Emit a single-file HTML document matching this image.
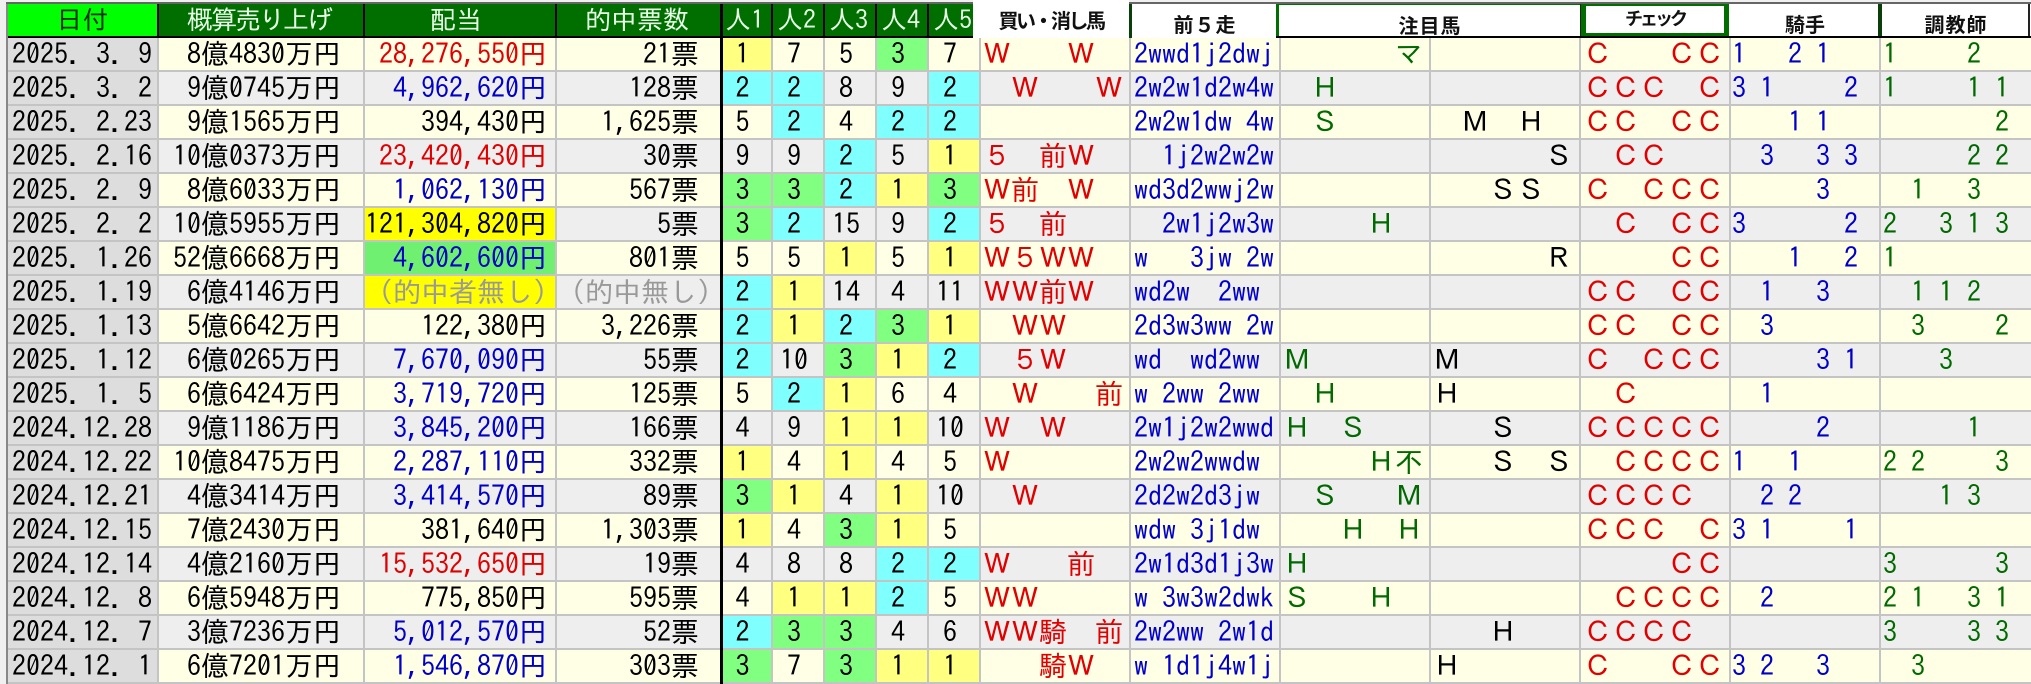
<!DOCTYPE html>
<html lang="ja"><head><meta charset="utf-8"><title>一覧</title>
<style>
html,body{margin:0;padding:0;background:#f0f0f0}
#p{position:relative;width:2031px;height:684px;overflow:hidden;background:#f0f0f0;font-family:"IPAGothic","Noto Sans CJK JP",monospace;font-size:28px;line-height:32px;color:#000}
.a{position:absolute}
#t{position:absolute;left:8px;top:38px;width:2023px;height:646px;background:#c4c4c4;display:flex;flex-direction:column;gap:2px}
.r{display:grid;grid-template-columns:149px 204px 190px 163px 49px 50px 50px 50px 50px 148px 148px 148px 148px 148px 148px 150px;column-gap:2px;height:32px}
.r>div{white-space:pre;overflow:visible}
.r:nth-child(odd)>div{background:#ffffe6}
.r:nth-child(even)>div{background:#eee}
.r>div:nth-child(1){background:#ddd!important;padding-left:4px}
.r>div:nth-child(2){text-align:right;padding-right:22px}
.r>div:nth-child(3){text-align:right;padding-right:8px}
.r>div:nth-child(4){text-align:right;padding-right:21px}
.r>div:nth-child(n+5):nth-child(-n+9){text-align:center;padding-right:8px}
.r>div:nth-child(10){color:#e00000;padding-left:2px}
.r>div:nth-child(11){color:#0000c8;padding-left:3px}
.r>div:nth-child(12){color:#006a00;padding-left:2px}
.r>div:nth-child(13){color:#000;padding-left:2px}
.r>div:nth-child(14){color:#e00000;padding-left:3px}
.r>div:nth-child(15){color:#0000c8;padding-left:1px}
.r>div:nth-child(16){color:#006a00;padding-left:2px}
.r>div.y{background:#ffff80!important}
.r>div.c{background:#80ffff!important}
.r>div.g{background:#80ff80!important}
.r>div.Y{background:#ffff00!important}
.r>div.G{background:#70f070!important}
.r>div.red{color:#e00000}
.r>div.blu{color:#0000c8}
.r>div.gy{color:#999;text-align:center!important;padding:0!important}
.h{position:absolute;top:4px;height:32px;line-height:32px;text-align:center;color:#e8ffe8;font-size:26px;white-space:pre}
.w{position:absolute;font-family:"Noto Sans CJK JP","IPAGothic",sans-serif;font-weight:700;color:#111;text-align:center;white-space:pre;line-height:24px;font-size:20px}
</style></head><body><div id="p">
<div class="a" style="left:6px;top:3px;width:2px;height:681px;background:#888"></div>
<div class="a" style="left:973px;top:0;width:156px;height:38px;background:#fff"></div>
<div class="a" style="left:1129px;top:3px;width:902px;height:35px;background:#fff"></div>
<div class="a" style="left:6px;top:2px;width:967px;height:2px;background:#666"></div>
<div class="a" style="left:1129px;top:2px;width:902px;height:2px;background:#666"></div>
<div class="a" style="left:8px;top:4px;width:965px;height:34px;background:#006f00"></div>
<div class="a" style="left:8px;top:4px;width:149px;height:32px;background:#00ff00"></div>
<div class="a" style="left:8px;top:36px;width:965px;height:2px;background:#000"></div>
<div class="a" style="left:1276px;top:36px;width:755px;height:2px;background:#000"></div>
<div class="a" style="left:157px;top:4px;width:2px;height:32px;background:#000"></div>
<div class="a" style="left:363px;top:4px;width:2px;height:32px;background:#000"></div>
<div class="a" style="left:555px;top:4px;width:2px;height:32px;background:#000"></div>
<div class="a" style="left:771px;top:4px;width:2px;height:32px;background:#000"></div>
<div class="a" style="left:823px;top:4px;width:2px;height:32px;background:#000"></div>
<div class="a" style="left:875px;top:4px;width:2px;height:32px;background:#000"></div>
<div class="a" style="left:927px;top:4px;width:2px;height:32px;background:#000"></div>
<div class="a" style="left:1129px;top:4px;width:3px;height:34px;background:#0a3f0a"></div>
<div class="a" style="left:1276px;top:4px;width:3px;height:32px;background:#006f00"></div>
<div class="a" style="left:1279px;top:4px;width:301px;height:1px;background:#006f00"></div>
<div class="a" style="left:1580px;top:4px;width:1px;height:32px;background:#222"></div>
<div class="a" style="left:1581px;top:4px;width:148px;height:32px;box-sizing:border-box;border:solid #006f00;border-width:2px 5px 3px 5px;background:#fff"></div>
<div class="a" style="left:1878px;top:4px;width:4px;height:32px;background:#0a3f0a"></div>
<div class="a" style="left:2028px;top:4px;width:2px;height:32px;background:#222"></div>

<div class="h" style="left:8px;width:149px;color:#002a00">日付</div>
<div class="h" style="left:159px;width:200px;letter-spacing:-2px">概算売り上げ</div>
<div class="h" style="left:365px;width:182px">配当</div>
<div class="h" style="left:557px;width:160px">的中票数</div>
<div class="h" style="left:725px;text-align:left">人1</div>
<div class="h" style="left:777px;text-align:left">人2</div>
<div class="h" style="left:829px;text-align:left">人3</div>
<div class="h" style="left:881px;text-align:left">人4</div>
<div class="h" style="left:933px;text-align:left">人5</div>
<div class="w" style="left:981px;width:140px;top:8px;letter-spacing:-2.5px">買い・消し馬</div>
<div class="w" style="left:1135px;width:140px;top:12px;letter-spacing:1px">前５走</div>
<div class="w" style="left:1380px;width:100px;top:13px;letter-spacing:1px">注目馬</div>
<div class="w" style="left:1595px;width:120px;top:6px;font-size:18px;letter-spacing:-3px">チェック</div>
<div class="w" style="left:1755px;width:100px;top:12px">騎手</div>
<div class="w" style="left:1906px;width:100px;top:12px;letter-spacing:1px">調教師</div>

<div id="t">
<div class="r"><div>2025. 3. 9</div><div>8億4830万円</div><div class="red">28,276,550円</div><div>21票</div><div class="y">1</div><div>7</div><div>5</div><div class="g">3</div><div>7</div><div>Ｗ　　Ｗ</div><div>2wwd1j2dwj</div><div>　　　　マ</div><div></div><div>Ｃ　　ＣＣ</div><div>1   2 1</div><div>1     2</div></div>
<div class="r"><div>2025. 3. 2</div><div>9億0745万円</div><div class="blu">4,962,620円</div><div>128票</div><div class="c">2</div><div class="c">2</div><div>8</div><div>9</div><div class="c">2</div><div>　Ｗ　　Ｗ</div><div>2w2w1d2w4w</div><div>　Ｈ</div><div></div><div>ＣＣＣ　Ｃ</div><div>3 1     2</div><div>1     1 1</div></div>
<div class="r"><div>2025. 2.23</div><div>9億1565万円</div><div>394,430円</div><div>1,625票</div><div>5</div><div class="c">2</div><div>4</div><div class="c">2</div><div class="c">2</div><div></div><div>2w2w1dw 4w</div><div>　Ｓ</div><div>　Ｍ　Ｈ</div><div>ＣＣ　ＣＣ</div><div>    1 1</div><div>        2</div></div>
<div class="r"><div>2025. 2.16</div><div>10億0373万円</div><div class="red">23,420,430円</div><div>30票</div><div>9</div><div>9</div><div class="c">2</div><div>5</div><div class="y">1</div><div>５　前Ｗ</div><div>  1j2w2w2w</div><div></div><div>　　　　Ｓ</div><div>　ＣＣ</div><div>  3   3 3</div><div>      2 2</div></div>
<div class="r"><div>2025. 2. 9</div><div>8億6033万円</div><div class="blu">1,062,130円</div><div>567票</div><div class="g">3</div><div class="g">3</div><div class="c">2</div><div class="y">1</div><div class="g">3</div><div>Ｗ前　Ｗ</div><div>wd3d2wwj2w</div><div></div><div>　　ＳＳ</div><div>Ｃ　ＣＣＣ</div><div>      3</div><div>  1   3</div></div>
<div class="r"><div>2025. 2. 2</div><div>10億5955万円</div><div class="Y">121,304,820円</div><div>5票</div><div class="g">3</div><div class="c">2</div><div>15</div><div>9</div><div class="c">2</div><div>５　前</div><div>  2w1j2w3w</div><div>　　　Ｈ</div><div></div><div>　Ｃ　ＣＣ</div><div>3       2</div><div>2   3 1 3</div></div>
<div class="r"><div>2025. 1.26</div><div>52億6668万円</div><div class="G blu">4,602,600円</div><div>801票</div><div>5</div><div>5</div><div class="y">1</div><div>5</div><div class="y">1</div><div>Ｗ５ＷＷ</div><div>w   3jw 2w</div><div></div><div>　　　　Ｒ</div><div>　　　ＣＣ</div><div>    1   2</div><div>1</div></div>
<div class="r"><div>2025. 1.19</div><div>6億4146万円</div><div class="Y gy">（的中者無し）</div><div class="gy">（的中無し）</div><div class="c">2</div><div class="y">1</div><div>14</div><div>4</div><div>11</div><div>ＷＷ前Ｗ</div><div>wd2w  2ww</div><div></div><div></div><div>ＣＣ　ＣＣ</div><div>  1   3</div><div>  1 1 2</div></div>
<div class="r"><div>2025. 1.13</div><div>5億6642万円</div><div>122,380円</div><div>3,226票</div><div class="c">2</div><div class="y">1</div><div class="c">2</div><div class="g">3</div><div class="y">1</div><div>　ＷＷ</div><div>2d3w3ww 2w</div><div></div><div></div><div>ＣＣ　ＣＣ</div><div>  3</div><div>  3     2</div></div>
<div class="r"><div>2025. 1.12</div><div>6億0265万円</div><div class="blu">7,670,090円</div><div>55票</div><div class="c">2</div><div>10</div><div class="g">3</div><div class="y">1</div><div class="c">2</div><div>　５Ｗ</div><div>wd  wd2ww</div><div>Ｍ</div><div>Ｍ</div><div>Ｃ　ＣＣＣ</div><div>      3 1</div><div>    3</div></div>
<div class="r"><div>2025. 1. 5</div><div>6億6424万円</div><div class="blu">3,719,720円</div><div>125票</div><div>5</div><div class="c">2</div><div class="y">1</div><div>6</div><div>4</div><div>　Ｗ　　前</div><div>w 2ww 2ww</div><div>　Ｈ</div><div>Ｈ</div><div>　Ｃ</div><div>  1</div><div></div></div>
<div class="r"><div>2024.12.28</div><div>9億1186万円</div><div class="blu">3,845,200円</div><div>166票</div><div>4</div><div>9</div><div class="y">1</div><div class="y">1</div><div>10</div><div>Ｗ　Ｗ</div><div>2w1j2w2wwd</div><div>Ｈ　Ｓ</div><div>　　Ｓ</div><div>ＣＣＣＣＣ</div><div>      2</div><div>      1</div></div>
<div class="r"><div>2024.12.22</div><div>10億8475万円</div><div class="blu">2,287,110円</div><div>332票</div><div class="y">1</div><div>4</div><div class="y">1</div><div>4</div><div>5</div><div>Ｗ</div><div>2w2w2wwdw</div><div>　　　Ｈ不</div><div>　　Ｓ　Ｓ</div><div>　ＣＣＣＣ</div><div>1   1</div><div>2 2     3</div></div>
<div class="r"><div>2024.12.21</div><div>4億3414万円</div><div class="blu">3,414,570円</div><div>89票</div><div class="g">3</div><div class="y">1</div><div>4</div><div class="y">1</div><div>10</div><div>　Ｗ</div><div>2d2w2d3jw</div><div>　Ｓ　　Ｍ</div><div></div><div>ＣＣＣＣ</div><div>  2 2</div><div>    1 3</div></div>
<div class="r"><div>2024.12.15</div><div>7億2430万円</div><div>381,640円</div><div>1,303票</div><div class="y">1</div><div>4</div><div class="g">3</div><div class="y">1</div><div>5</div><div></div><div>wdw 3j1dw</div><div>　　Ｈ　Ｈ</div><div></div><div>ＣＣＣ　Ｃ</div><div>3 1     1</div><div></div></div>
<div class="r"><div>2024.12.14</div><div>4億2160万円</div><div class="red">15,532,650円</div><div>19票</div><div>4</div><div>8</div><div>8</div><div class="c">2</div><div class="c">2</div><div>Ｗ　　前</div><div>2w1d3d1j3w</div><div>Ｈ</div><div></div><div>　　　ＣＣ</div><div></div><div>3       3</div></div>
<div class="r"><div>2024.12. 8</div><div>6億5948万円</div><div>775,850円</div><div>595票</div><div>4</div><div class="y">1</div><div class="y">1</div><div class="c">2</div><div>5</div><div>ＷＷ</div><div>w 3w3w2dwk</div><div>Ｓ　　Ｈ</div><div></div><div>　ＣＣＣＣ</div><div>  2</div><div>2 1   3 1</div></div>
<div class="r"><div>2024.12. 7</div><div>3億7236万円</div><div class="blu">5,012,570円</div><div>52票</div><div class="c">2</div><div class="g">3</div><div class="g">3</div><div>4</div><div>6</div><div>ＷＷ騎　前</div><div>2w2ww 2w1d</div><div></div><div>　　Ｈ</div><div>ＣＣＣＣ</div><div></div><div>3     3 3</div></div>
<div class="r"><div>2024.12. 1</div><div>6億7201万円</div><div class="blu">1,546,870円</div><div>303票</div><div class="g">3</div><div>7</div><div class="g">3</div><div class="y">1</div><div class="y">1</div><div>　　騎Ｗ</div><div>w 1d1j4w1j</div><div></div><div>Ｈ</div><div>Ｃ　　ＣＣ</div><div>3 2   3</div><div>  3</div></div>
</div>
<div class="a" style="left:720px;top:4px;width:3px;height:680px;background:#000"></div>
</div></body></html>
